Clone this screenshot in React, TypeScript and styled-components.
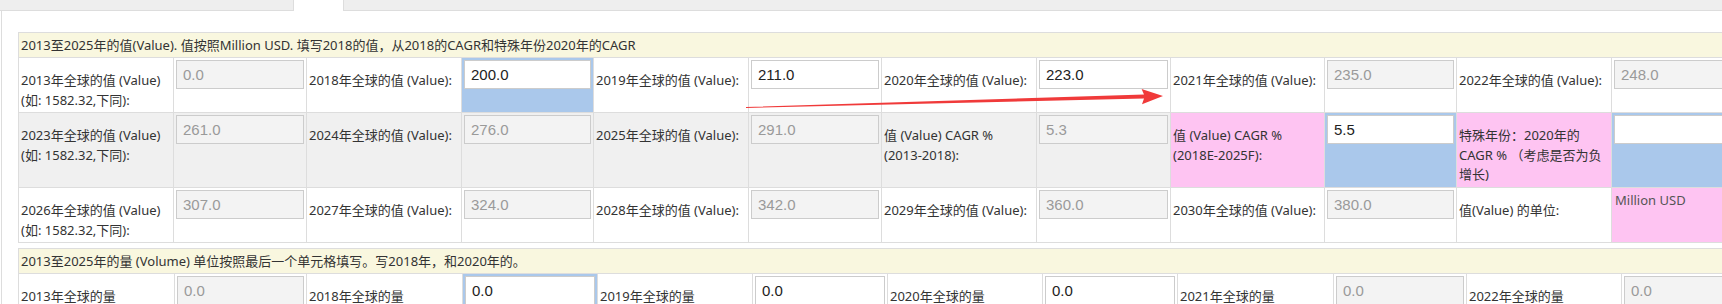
import { FC, ReactNode } from "react";
import styled, { createGlobalStyle } from "styled-components";

type Tone = "plain" | "grey" | "pink" | "blue";

const toneColors: Record<Tone, string> = {
    plain: "#ffffff",
    grey: "#f0f0f0",
    pink: "#fec4f2",
    blue: "#aac8eb",
};

type Cell =
    | { kind: "label"; text: ReactNode; tone?: Tone }
    | { kind: "input"; value: string; locked?: boolean; tone?: Tone }
    | { kind: "note"; text: string; tone?: Tone };

const valueColumns = [155, 133, 155, 132, 155, 133, 155, 134, 154, 132, 155, 133];
const volumeColumns = [156, 132, 156, 135, 155, 135, 155, 135, 156, 133, 155, 135];

const twoLines = (first: string, second: string) => (
    <>
        {first}
        <br />
        {second}
    </>
);

const label = (text: ReactNode, tone?: Tone): Cell => ({ kind: "label", text, tone });
const field = (value: string, locked = true, tone?: Tone): Cell => ({
    kind: "input",
    value,
    locked,
    tone,
});

const valueRows: { height: number; tone: Tone; cells: Cell[] }[] = [
    {
        height: 55,
        tone: "plain",
        cells: [
            label(twoLines("2013年全球的值 (Value)", "(如: 1582.32,下同):")),
            field("0.0"),
            label("2018年全球的值 (Value):"),
            field("200.0", false, "blue"),
            label("2019年全球的值 (Value):"),
            field("211.0", false),
            label("2020年全球的值 (Value):"),
            field("223.0", false),
            label("2021年全球的值 (Value):"),
            field("235.0"),
            label("2022年全球的值 (Value):"),
            field("248.0"),
        ],
    },
    {
        height: 75,
        tone: "grey",
        cells: [
            label(twoLines("2023年全球的值 (Value)", "(如: 1582.32,下同):")),
            field("261.0"),
            label("2024年全球的值 (Value):"),
            field("276.0"),
            label("2025年全球的值 (Value):"),
            field("291.0"),
            label(twoLines("值 (Value) CAGR %", "(2013-2018):")),
            field("5.3"),
            label(twoLines("值 (Value) CAGR %", "(2018E-2025F):"), "pink"),
            field("5.5", false, "blue"),
            label(
                <>
                    特殊年份：2020年的
                    <br />
                    CAGR % （考虑是否为负
                    <br />
                    增长)
                </>,
                "pink"
            ),
            field("", false, "blue"),
        ],
    },
    {
        height: 55,
        tone: "plain",
        cells: [
            label(twoLines("2026年全球的值 (Value)", "(如: 1582.32,下同):")),
            field("307.0"),
            label("2027年全球的值 (Value):"),
            field("324.0"),
            label("2028年全球的值 (Value):"),
            field("342.0"),
            label("2029年全球的值 (Value):"),
            field("360.0"),
            label("2030年全球的值 (Value):"),
            field("380.0"),
            label("值(Value) 的单位:"),
            { kind: "note", text: "Million USD", tone: "pink" },
        ],
    },
];

const volumeRows: { height: number; tone: Tone; cells: Cell[] }[] = [
    {
        height: 55,
        tone: "plain",
        cells: [
            label("2013年全球的量"),
            field("0.0"),
            label("2018年全球的量"),
            field("0.0", false, "blue"),
            label("2019年全球的量"),
            field("0.0", false),
            label("2020年全球的量"),
            field("0.0", false),
            label("2021年全球的量"),
            field("0.0"),
            label("2022年全球的量"),
            field("0.0"),
        ],
    },
];

const FormSection: FC<{
    title: string;
    columns: number[];
    rows: { height: number; tone: Tone; cells: Cell[] }[];
}> = ({ title, columns, rows }) => (
    <Grid
        style={{
            gridTemplateColumns: columns.map((w) => `${w}px`).join(" "),
            gridTemplateRows: ["25px", ...rows.map((r) => `${r.height}px`)].join(" "),
        }}
    >
        <SectionTitle>{title}</SectionTitle>
        {rows.map((row, r) =>
            row.cells.map((cell, c) => {
                const tone = cell.tone ?? row.tone;
                if (cell.kind === "input") {
                    return (
                        <FieldCell key={`${r}-${c}`} $tone={tone}>
                            <NumberInput
                                defaultValue={cell.value}
                                disabled={cell.locked}
                            />
                        </FieldCell>
                    );
                }
                if (cell.kind === "note") {
                    return (
                        <NoteCell key={`${r}-${c}`} $tone={tone}>
                            {cell.text}
                        </NoteCell>
                    );
                }
                return (
                    <LabelCell key={`${r}-${c}`} $tone={tone}>
                        {cell.text}
                    </LabelCell>
                );
            })
        )}
    </Grid>
);

const Arrow: FC = () => (
    <ArrowLayer width="1722" height="304" viewBox="0 0 1722 304">
        <polygon
            points="746,108 1144,98.6 1142,104.2 1163,96 1141.6,88.9 1144,94.6 746,107"
            fill="#f03a3a"
        />
    </ArrowLayer>
);

export default function App() {
    return (
        <Page>
            <GlobalStyle />
            <TabBar>
                <TabRest style={{ flex: "0 0 293px" }} />
                <ActiveTab />
                <TabRest />
            </TabBar>
            <Panel>
                <FormSection
                    title="2013至2025年的值(Value). 值按照Million USD. 填写2018的值，从2018的CAGR和特殊年份2020年的CAGR"
                    columns={valueColumns}
                    rows={valueRows}
                />
                <Spacer />
                <FormSection
                    title="2013至2025年的量 (Volume) 单位按照最后一个单元格填写。写2018年，和2020年的。"
                    columns={volumeColumns}
                    rows={volumeRows}
                />
            </Panel>
            <Arrow />
        </Page>
    );
}

const GlobalStyle = createGlobalStyle`
    html, body {
        margin: 0;
        padding: 0;
        background: #ffffff;
        overflow: hidden;
    }

    body {
        font-family: "Noto Sans", "Noto Sans CJK SC", sans-serif;
        color: #333333;
    }
`;

const Page = styled.div`
    position: relative;
    width: 1722px;
    height: 304px;
    overflow: hidden;
`;

const TabBar = styled.div`
    display: flex;
    height: 11px;
`;

const TabRest = styled.div`
    flex: 1;
    background: #eeeeee;
    border-bottom: 1px solid #dddddd;
`;

const ActiveTab = styled.div`
    flex: 0 0 51px;
    box-sizing: border-box;
    background: #ffffff;
    border-left: 1px solid #dddddd;
    border-right: 1px solid #dddddd;
`;

const Panel = styled.div`
    margin-left: 1px;
    border-left: 1px solid #dddddd;
    padding: 21px 0 0 16px;
    height: 400px;
`;

const Spacer = styled.div`
    height: 5px;
`;

const Grid = styled.div`
    display: grid;
    width: max-content;
    border-top: 1px solid #dddddd;
    border-left: 1px solid #dddddd;
`;

const BaseCell = styled.div<{ $tone: Tone }>`
    box-sizing: border-box;
    background: ${({ $tone }) => toneColors[$tone]};
    border-right: 1px solid #dddddd;
    border-bottom: 1px solid #dddddd;
    font-size: 13px;
    white-space: nowrap;
    overflow: hidden;
`;

const SectionTitle = styled.div`
    grid-column: 1 / -1;
    box-sizing: border-box;
    background: #f9f7df;
    border-right: 1px solid #dddddd;
    border-bottom: 1px solid #dddddd;
    padding: 0 2px;
    font-size: 13px;
    line-height: 24px;
    color: #333333;
    white-space: nowrap;
`;

const LabelCell = styled(BaseCell)`
    padding: 13px 2px 0;
    line-height: 19.5px;
    color: #333333;
`;

const NoteCell = styled(BaseCell)`
    padding: 3px 3px 0;
    line-height: 19.5px;
    color: #555555;
`;

const FieldCell = styled(BaseCell)`
    padding: 2px 2px 0;
`;

const NumberInput = styled.input`
    display: block;
    box-sizing: border-box;
    width: 100%;
    height: 29px;
    margin: 0;
    padding: 0 6px;
    border: 1px solid #cccccc;
    border-radius: 0;
    background: #ffffff;
    font-family: "Liberation Sans", Arial, sans-serif;
    font-size: 15px;
    color: #222222;
    outline: none;

    &:disabled {
        background: #f3f3f3;
        color: #9a9a9a;
        opacity: 1;
        -webkit-text-fill-color: #9a9a9a;
    }
`;

const ArrowLayer = styled.svg`
    position: absolute;
    left: 0;
    top: 0;
    pointer-events: none;
`;
